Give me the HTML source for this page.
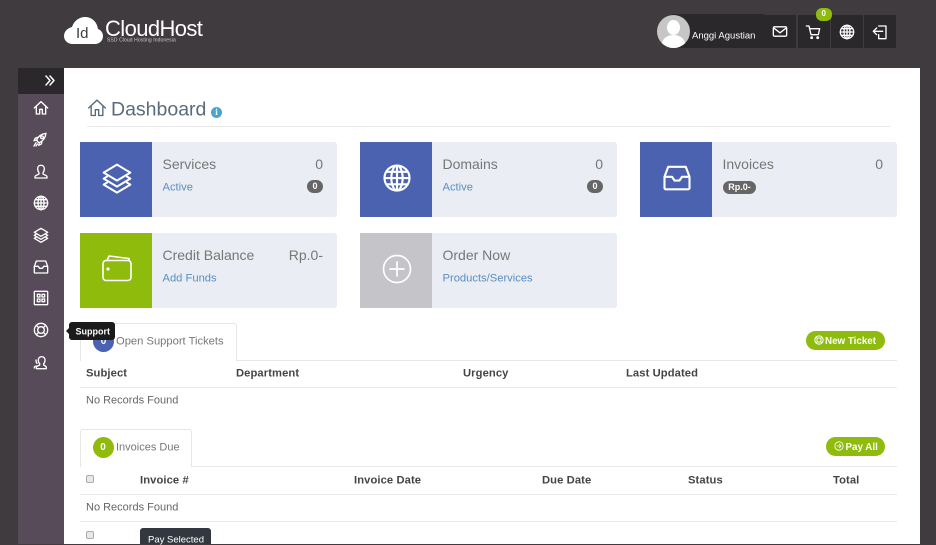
<!DOCTYPE html>
<html><head><meta charset="utf-8"><title>Dashboard</title>
<style>
html,body{margin:0;padding:0}
body{width:936px;height:544px;overflow:hidden;position:relative;background:#3f3b3e;font-family:"Liberation Sans",Arial,sans-serif;filter:blur(.3px)}
.a,.t,.icon{position:absolute}
.t{white-space:nowrap;line-height:1;transform:translateY(-50%)}
.r{transform:translate(-100%,-50%)}
.icon{fill:none;stroke:#fff;stroke-width:2;stroke-linecap:round;stroke-linejoin:round}
.card{position:absolute;width:257px;height:75.5px;background:#eaedf3;border-radius:0 3px 3px 0}
.ci{position:absolute;left:0;top:0;width:72px;height:100%}
.h{font-size:14px;color:#777}
.lnk{font-size:11.2px;color:#5a8fc2}
.pill{position:absolute;background:#666;border-radius:7px;color:#fff;font-size:9px;font-weight:bold;text-align:center;line-height:13px;height:13px}
.th{font-size:11.2px;font-weight:bold;color:#444;letter-spacing:.1px}
.nr{font-size:11px;color:#666}
.ln{position:absolute;left:80px;width:817px;height:1px;background:#e8e8e8}
.btn{position:absolute;background:#8fbb0c;border-radius:10px;height:19px}
.btn span{position:absolute;top:5.5px;color:#fff;font-size:9.8px;font-weight:bold;line-height:1;white-space:nowrap}
.hb{position:absolute;top:15px;height:33px;background:#2a282a}
.cb{position:absolute;left:86px;width:6px;height:6px;background:#e8e8e8;border:1px solid #aaa;border-radius:2px}
.tab{position:absolute;left:80px;background:#fff;border:1px solid #e6e6e6;border-bottom:0;border-radius:3px 3px 0 0}
.circ{position:absolute;width:21px;height:21px;border-radius:50%;color:#fff;font-size:10px;font-weight:bold;line-height:21px;text-align:center}
</style></head>
<body>
<svg width="0" height="0" style="position:absolute">
<symbol id="home" viewBox="0 0 24 24"><path d="M2 12 12 2.5 22 12M5 10v11h5v-7h4v7h5V10"/></symbol>
<symbol id="rocket" viewBox="0 0 24 24"><path d="M9 15 7 12c2-5 7-9 14-10-1 7-5 12-10 14zM7 12l-4 1 2-4 4-1M11 16l-1 4 4-2 1-4M6 16l-3 5M8 18l-2 3"/><circle cx="15" cy="8" r="2"/></symbol>
<symbol id="user" viewBox="0 0 24 24"><path d="M3 21v-2c0-2 5-3 6-4v-2c-2-2-2-4-2-6 0-3 2-5 5-5s5 2 5 5c0 2 0 4-2 6v2c1 1 6 2 6 4v2z"/></symbol>
<symbol id="globe" viewBox="0 0 24 24"><circle cx="12" cy="12" r="10"/><ellipse cx="12" cy="12" rx="4.5" ry="10"/><path d="M12 2v20M2 12h20M3.5 7h17M3.5 17h17"/></symbol>
<symbol id="layers" viewBox="0 0 24 24"><path d="M12 2 22 8l-10 6L2 8zM4.500 11 2 12.500l10 6 10-6L19.500 11M4.500 15.500 2 17l10 6 10-6-2.500-1.500"/></symbol>
<symbol id="inbox" viewBox="0 0 24 24"><path d="M5 3h14l3 8v9a1 1 0 0 1-1 1H3a1 1 0 0 1-1-1v-9zM2 11h6l2 3h4l2-3h6"/></symbol>
<symbol id="grid" viewBox="0 0 24 24"><rect x="2" y="2" width="20" height="20" rx="1"/><rect x="6.500" y="6.500" width="4" height="4"/><rect x="13.500" y="6.500" width="4" height="4"/><rect x="6.500" y="13.500" width="4" height="4"/><rect x="13.500" y="13.500" width="4" height="4"/></symbol>
<symbol id="support" viewBox="0 0 24 24"><circle cx="12" cy="12" r="10"/><circle cx="12" cy="12" r="5"/><path d="M5 5l3.500 3.500M19 5l-3.500 3.500M5 19l3.500-3.500M19 19l-3.500-3.500"/></symbol>
<symbol id="users" viewBox="0 0 24 24"><path d="M5 22v-2c0-2 4-2.500 5-3.500v-2c-2-1.500-2-4-2-5.500 0-3 2-5 5-5s5 2 5 5c0 1.500 0 4-2 5.500v2c1 1 4 1.500 4 3.500v2zM6 14c-1-1-1.500-3-1.500-5M5 18c-2 .5-3 1-3 2v1"/></symbol>
</svg>

<!-- header -->
<svg class="a" style="left:64px;top:16px" width="40" height="29" viewBox="0 0 40 29"><path d="M9 28C3 28 0 24 0 20 0 15 4 12 8 11 10 5 15 1 21 1c7 0 12 5 13 12 3 1 5 4 5 7 0 5-4 8-8 8z" fill="#fff"/><text x="12" y="22" font-family="Liberation Sans" font-size="15" fill="#3f3b3e">Id</text></svg>
<div class="t" style="left:105px;top:28.500px;font-size:22px;color:#fff;letter-spacing:-.6px">CloudHost</div>
<div class="t" style="left:107px;top:40.500px;font-size:5px;color:#ccc;letter-spacing:.1px">SSD Cloud Hosting Indonesia</div>

<div class="a" style="left:672px;top:14px;width:92px;height:34px;background:#2a282a"></div>
<div class="a" style="left:656.500px;top:14.500px;width:33px;height:33px;border-radius:50%;background:#c6c6c6;overflow:hidden">
  <div class="a" style="left:10px;top:5px;width:13px;height:15px;border-radius:50%;background:#fff"></div>
  <div class="a" style="left:5px;top:20px;width:23px;height:18px;border-radius:50%;background:#fff"></div>
</div>
<div class="t" style="left:692px;top:35.500px;font-size:9.500px;color:#fff">Anggi Agustian</div>
<div class="hb" style="left:764px;width:32px"></div>
<div class="hb" style="left:798px;width:32px"></div>
<div class="hb" style="left:831px;width:32px"></div>
<div class="hb" style="left:864px;width:32px"></div>
<svg class="icon" style="left:772px;top:24px" width="16" height="15" viewBox="0 0 24 22"><rect x="2" y="4" width="20" height="14" rx="2"/><path d="m3 6 9 7 9-7"/></svg>
<svg class="icon" style="left:805px;top:24px" width="16" height="16" viewBox="0 0 24 24"><path d="M2 3h4l3 13h11l2-9H7"/><circle cx="10" cy="20.500" r="1.200"/><circle cx="19" cy="20.500" r="1.200"/></svg>
<svg class="icon" style="left:838.500px;top:23.500px" width="16" height="16"><use href="#globe"/></svg>
<svg class="icon" style="left:872px;top:24px" width="16" height="16" viewBox="0 0 24 24"><path d="M10 3h11v19H10v-6M16 11H2M7 6l-5 5 5 5"/></svg>
<div class="a" style="left:816px;top:8px;width:15.500px;height:12.500px;border-radius:6px;background:#8fbb0c;color:#fff;font-size:8px;font-weight:bold;text-align:center;line-height:12.500px">0</div>

<!-- sidebar -->
<div class="a" style="left:18px;top:68px;width:46px;height:476px;background:#584b59"></div>
<div class="a" style="left:18px;top:68px;width:46px;height:26px;background:#2a282a"></div>
<svg class="icon" style="left:45px;top:75px;stroke-width:1.500" width="10" height="11" viewBox="0 0 10 11"><path d="m1 1 4 4.500-4 4.500M5 1l4 4.500-4 4.500"/></svg>
<svg class="icon" style="left:32.500px;top:100px" width="16" height="16"><use href="#home"/></svg>
<svg class="icon" style="left:32px;top:132px" width="16" height="16"><use href="#rocket"/></svg>
<svg class="icon" style="left:32.500px;top:164px" width="16" height="16"><use href="#user"/></svg>
<svg class="icon" style="left:32.500px;top:195px" width="16" height="16"><use href="#globe"/></svg>
<svg class="icon" style="left:32.500px;top:227px" width="16" height="16"><use href="#layers"/></svg>
<svg class="icon" style="left:32.500px;top:259px" width="16" height="16"><use href="#inbox"/></svg>
<svg class="icon" style="left:32.500px;top:290px" width="16" height="16"><use href="#grid"/></svg>
<svg class="icon" style="left:32.500px;top:322px" width="16" height="16"><use href="#support"/></svg>
<svg class="icon" style="left:32.500px;top:354px" width="16" height="16"><use href="#users"/></svg>

<!-- panel -->
<div class="a" style="left:64px;top:68px;width:856px;height:476px;background:#fff"></div>
<svg class="icon" style="left:87px;top:98px;stroke:#55677a;stroke-width:1.600" width="20" height="20"><use href="#home"/></svg>
<div class="t" style="left:111px;top:109.500px;font-size:19.500px;color:#5b6b7b">Dashboard</div>
<div class="a" style="left:211px;top:107px;width:11px;height:11px;border-radius:50%;background:#4ba3d0;color:#fff;font:bold 9px/11px 'Liberation Serif',serif;text-align:center">i</div>
<div class="a" style="left:87px;top:126px;width:803px;height:1px;background:#e9e9e9"></div>

<!-- cards -->
<div class="card" style="left:80px;top:141.500px"><div class="ci" style="background:#4a62b0"></div></div>
<svg class="icon" style="left:101px;top:162px;stroke-width:1.500" width="32" height="32"><use href="#layers"/></svg>
<div class="t h" style="left:162.500px;top:164px">Services</div>
<div class="t h r" style="left:323px;top:164px">0</div>
<div class="t lnk" style="left:162.500px;top:187.500px">Active</div>
<div class="pill" style="left:307px;top:180px;width:16px">0</div>

<div class="card" style="left:360px;top:141.500px"><div class="ci" style="background:#4a62b0"></div></div>
<svg class="icon" style="left:382px;top:163px;stroke-width:1.700" width="30" height="30"><use href="#globe"/></svg>
<div class="t h" style="left:442.500px;top:164px">Domains</div>
<div class="t h r" style="left:603px;top:164px">0</div>
<div class="t lnk" style="left:442.500px;top:187.500px">Active</div>
<div class="pill" style="left:587px;top:180px;width:16px">0</div>

<div class="card" style="left:640px;top:141.500px"><div class="ci" style="background:#4a62b0"></div></div>
<svg class="icon" style="left:662px;top:163px;stroke-width:1.700" width="30" height="30"><use href="#inbox"/></svg>
<div class="t h" style="left:722.500px;top:164px">Invoices</div>
<div class="t h r" style="left:883px;top:164px">0</div>
<div class="pill" style="left:723px;top:181px;width:33px">Rp.0-</div>

<div class="card" style="left:80px;top:232.500px"><div class="ci" style="background:#8fbb0c"></div></div>
<svg class="icon" style="left:102px;top:254px;stroke-width:1.600" width="30" height="30" viewBox="0 0 30 30"><rect x="1" y="6.500" width="28" height="20" rx="3"/><path d="M5 6.500 7 2l20 2.500v2"/><circle cx="6" cy="15" r=".8" fill="#fff"/></svg>
<div class="t h" style="left:162.500px;top:255px">Credit Balance</div>
<div class="t h r" style="left:323px;top:255px">Rp.0-</div>
<div class="t lnk" style="left:162.500px;top:278.500px">Add Funds</div>

<div class="card" style="left:360px;top:232.500px"><div class="ci" style="background:#c5c4c9"></div></div>
<svg class="icon" style="left:382px;top:254px;stroke-width:1.700" width="30" height="30" viewBox="0 0 30 30"><circle cx="15" cy="15" r="13.500"/><path d="M15 8v14M8 15h14"/></svg>
<div class="t h" style="left:442.500px;top:255px">Order Now</div>
<div class="t lnk" style="left:442.500px;top:278.500px">Products/Services</div>

<!-- tickets -->
<div class="ln" style="top:359.500px"></div>
<div class="tab" style="top:323px;width:155px;height:37px"></div>
<div class="circ" style="left:93px;top:331px;background:#4a62b0">0</div>
<div class="t" style="left:116px;top:341.500px;font-size:11.200px;color:#777">Open Support Tickets</div>
<div class="btn" style="left:806px;top:331px;width:79px"><svg class="icon" style="left:7.500px;top:4px;stroke-width:2.400" width="10" height="10"><use href="#support"/></svg><span style="left:19px">New Ticket</span></div>
<div class="t th" style="left:86px;top:374px">Subject</div>
<div class="t th" style="left:236px;top:374px">Department</div>
<div class="t th" style="left:463px;top:374px">Urgency</div>
<div class="t th" style="left:626px;top:374px">Last Updated</div>
<div class="ln" style="top:387px"></div>
<div class="t nr" style="left:86px;top:401px">No Records Found</div>

<!-- invoices -->
<div class="ln" style="top:465.500px"></div>
<div class="tab" style="top:429px;width:110px;height:37px"></div>
<div class="circ" style="left:92.500px;top:437px;background:#8fbb0c">0</div>
<div class="t" style="left:116px;top:447.500px;font-size:11px;color:#777">Invoices Due</div>
<div class="btn" style="left:826px;top:437px;width:59px"><svg class="icon" style="left:7.500px;top:4px;stroke-width:2" width="10" height="10" viewBox="0 0 24 24"><circle cx="12" cy="12" r="10"/><path d="M7 12h10M13 8l4 4-4 4"/></svg><span style="left:19.500px">Pay All</span></div>
<div class="cb" style="top:475px"></div>
<div class="t th" style="left:140px;top:481px">Invoice #</div>
<div class="t th" style="left:354px;top:481px">Invoice Date</div>
<div class="t th" style="left:542px;top:481px">Due Date</div>
<div class="t th" style="left:688px;top:481px">Status</div>
<div class="t th" style="left:833px;top:481px">Total</div>
<div class="ln" style="top:494px"></div>
<div class="t nr" style="left:86px;top:508px">No Records Found</div>
<div class="ln" style="top:521px"></div>
<div class="cb" style="top:531px"></div>
<div class="a" style="left:140px;top:528px;width:71px;height:16px;background:#333840;border-radius:3px 3px 0 0"></div>
<div class="t" style="left:148px;top:539.500px;font-size:9.500px;color:#fff">Pay Selected</div>

<!-- tooltip -->
<div class="a" style="left:66px;top:327px;width:0;height:0;border:4px solid transparent;border-left:0;border-right-color:#1b1b1b"></div>
<div class="a" style="left:69px;top:322px;width:46px;height:18px;background:#1b1b1b;border-radius:3px"></div>
<div class="t" style="left:75.500px;top:331.500px;font-size:9px;font-weight:bold;color:#fff">Support</div>
</body></html>
